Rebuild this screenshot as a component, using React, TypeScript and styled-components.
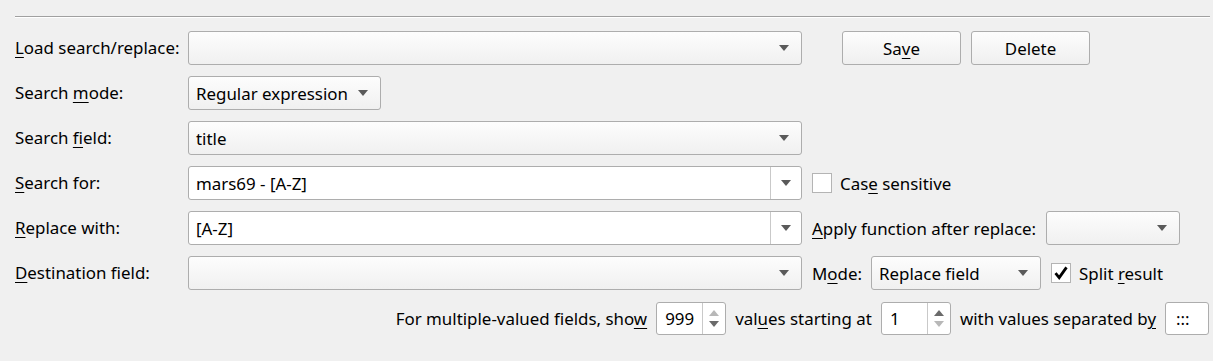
import React from 'react';
import styled, { createGlobalStyle } from 'styled-components';

const Global = createGlobalStyle`
  html, body { margin: 0; padding: 0; background: #f0f0f0; }
  body {
    font-family: "Noto Sans", "Open Sans", sans-serif;
    font-size: 16.9px;
    color: #000;
  }
`;

const Page = styled.div`
  width: 1213px;
  height: 361px;
  box-sizing: border-box;
  padding: 16px 3px 0 15px;
  background: #f0f0f0;
`;

const Rule = styled.div`
  height: 1px;
  background: #a0a0a0;
  border-bottom: 1px solid #ffffff;
  margin-bottom: 13px;
`;

const Form = styled.div`
  display: grid;
  grid-template-columns: 173px 614px 1fr;
  grid-auto-rows: 34px;
  row-gap: 11px;
  align-items: center;
`;

const Label = styled.div`
  white-space: nowrap;
  line-height: 22px;
`;

const Txt = styled.span`
  white-space: pre;
`;

const Mn = styled.u`
  text-decoration: underline;
  text-underline-offset: 3px;
  text-decoration-thickness: 1px;
`;

const Side = styled.div<{ $pad?: number }>`
  display: flex;
  align-items: center;
  height: 100%;
  padding-left: ${(p) => p.$pad ?? 10}px;
  white-space: nowrap;
`;

const ComboBox = styled.div<{ $editable?: boolean; $w?: number }>`
  position: relative;
  box-sizing: border-box;
  height: 34px;
  width: ${(p) => (p.$w ? `${p.$w}px` : '100%')};
  border: 1px solid #adadad;
  border-radius: 3px;
  background: ${(p) =>
    p.$editable ? '#ffffff' : 'linear-gradient(#fdfdfd, #f0f0f0)'};
  display: flex;
  align-items: center;
  padding-left: 7px;
  padding-right: ${(p) => (p.$editable ? 30 : 28)}px;
  white-space: nowrap;
  flex-shrink: 0;
`;

const DropZone = styled.div<{ $editable?: boolean }>`
  position: absolute;
  top: 0;
  right: 0;
  bottom: 0;
  width: ${(p) => (p.$editable ? 30 : 34)}px;
  display: flex;
  align-items: center;
  justify-content: center;
  border-left: ${(p) => (p.$editable ? '1px solid #c9c9c9' : 'none')};
`;

const Arrow = styled.span<{ $tone?: string }>`
  width: 0;
  height: 0;
  border-left: 5.5px solid transparent;
  border-right: 5.5px solid transparent;
  border-top: 6px solid ${(p) => p.$tone ?? '#5a5a5a'};
`;

const UpArrow = styled.span<{ $tone?: string }>`
  width: 0;
  height: 0;
  border-left: 5.5px solid transparent;
  border-right: 5.5px solid transparent;
  border-bottom: 6px solid ${(p) => p.$tone ?? '#5a5a5a'};
`;

const Button = styled.button<{ $gap?: number }>`
  box-sizing: border-box;
  width: 119px;
  height: 34px;
  margin-left: ${(p) => p.$gap ?? 0}px;
  border: 1px solid #adadad;
  border-radius: 3px;
  background: linear-gradient(#fdfdfd, #efefef);
  font: inherit;
  color: #000;
  padding: 0;
`;

const Check = styled.span`
  box-sizing: border-box;
  width: 20px;
  height: 20px;
  border: 1px solid #b4b4b4;
  background: #fff;
  margin-right: 8px;
  display: inline-flex;
  align-items: center;
  justify-content: center;
  flex-shrink: 0;
`;

const Gap = styled.span<{ $w: number }>`
  display: inline-block;
  width: ${(p) => p.$w}px;
  flex-shrink: 0;
`;

const BottomRow = styled.div`
  grid-column: 1 / -1;
  display: flex;
  align-items: center;
  justify-content: flex-end;
  height: 100%;
  padding-right: 1px;
  white-space: nowrap;
`;

const Spin = styled.div`
  position: relative;
  box-sizing: border-box;
  width: 70px;
  height: 33px;
  border: 1px solid #adadad;
  border-radius: 3px;
  background: #fff;
  display: flex;
  align-items: center;
  padding-left: 8px;
  margin: 0 9px;
`;

const SpinButtons = styled.div`
  position: absolute;
  top: 0;
  right: 0;
  bottom: 0;
  width: 22px;
  border-left: 1px solid #c9c9c9;
  display: flex;
  flex-direction: column;
  align-items: center;
  justify-content: center;
  gap: 5px;
`;

const TextBox = styled.div`
  box-sizing: border-box;
  width: 44px;
  height: 33px;
  border: 1px solid #adadad;
  border-radius: 3px;
  background: #fff;
  display: flex;
  align-items: center;
  padding-left: 10px;
  margin-left: 9px;
`;

function Combo(props: { text?: string; editable?: boolean; w?: number }) {
  return (
    <ComboBox $editable={props.editable} $w={props.w}>
      {props.text}
      <DropZone $editable={props.editable}>
        <Arrow />
      </DropZone>
    </ComboBox>
  );
}

function CheckMark() {
  return (
    <svg width="16" height="16" viewBox="0 0 16 16">
      <path d="M2.5 8.2 L6.2 12.6 L13.5 2.4" fill="none" stroke="#000" strokeWidth="2.8" />
    </svg>
  );
}

export default function App() {
  return (
    <Page>
      <Global />
      <Rule />
      <Form>
        <Label>
          <Mn>L</Mn>oad search/replace:
        </Label>
        <Combo />
        <Side $pad={40}>
          <Button>
            Sa<Mn>v</Mn>e
          </Button>
          <Button $gap={10}>Delete</Button>
        </Side>

        <Label>
          Search <Mn>m</Mn>ode:
        </Label>
        <div>
          <Combo text="Regular expression" w={193} />
        </div>
        <div />

        <Label>
          Search <Mn>f</Mn>ield:
        </Label>
        <Combo text="title" />
        <div />

        <Label>
          <Mn>S</Mn>earch for:
        </Label>
        <Combo text="mars69 - [A-Z]" editable />
        <Side>
          <Check />
          <Txt>
            Cas<Mn>e</Mn> sensitive
          </Txt>
        </Side>

        <Label>
          <Mn>R</Mn>eplace with:
        </Label>
        <Combo text="[A-Z]" editable />
        <Side>
          <Txt>
            <Mn>A</Mn>pply function after replace:
          </Txt>
          <Gap $w={10} />
          <Combo w={134} />
        </Side>

        <Label>
          <Mn>D</Mn>estination field:
        </Label>
        <Combo />
        <Side>
          <Txt>
            M<Mn>o</Mn>de:
          </Txt>
          <Gap $w={9} />
          <Combo text="Replace field" w={170} />
          <Gap $w={10} />
          <Check>
            <CheckMark />
          </Check>
          <Txt>
            Split <Mn>r</Mn>esult
          </Txt>
        </Side>

        <BottomRow>
          <Txt>
            For multiple-valued fields, sho<Mn>w</Mn>
          </Txt>
          <Spin>
            999
            <SpinButtons>
              <UpArrow $tone="#b8b8b8" />
              <Arrow $tone="#6a6a6a" />
            </SpinButtons>
          </Spin>
          <Txt>
            val<Mn>u</Mn>es starting at
          </Txt>
          <Spin>
            1
            <SpinButtons>
              <UpArrow $tone="#6a6a6a" />
              <Arrow $tone="#b8b8b8" />
            </SpinButtons>
          </Spin>
          <Txt>
            with values separated b<Mn>y</Mn>
          </Txt>
          <TextBox>:::</TextBox>
        </BottomRow>
      </Form>
    </Page>
  );
}
